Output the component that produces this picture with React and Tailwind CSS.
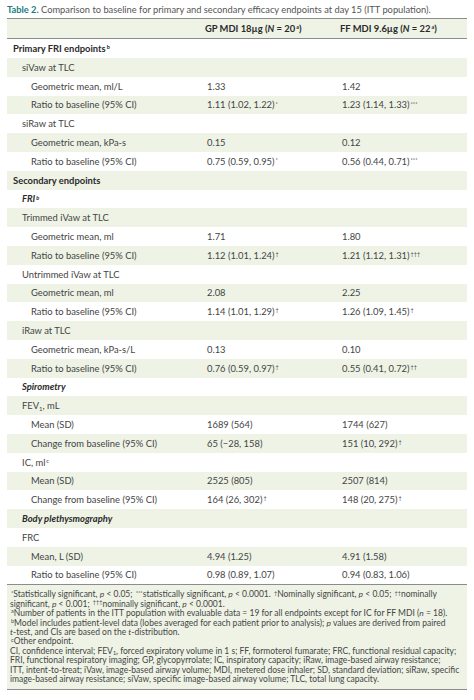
import React from "react";

const rows = [
  { level: 0, label: "Primary FRI endpoints", sup: "b", bold: true },
  { level: 1, label: "siVaw at TLC" },
  { level: 2, label: "Geometric mean, ml/L", a: "1.33", b: "1.42" },
  { level: 2, label: "Ratio to baseline (95% CI)", a: "1.11 (1.02, 1.22)", as: "*", b: "1.23 (1.14, 1.33)", bs: "***" },
  { level: 1, label: "siRaw at TLC" },
  { level: 2, label: "Geometric mean, kPa-s", a: "0.15", b: "0.12" },
  { level: 2, label: "Ratio to baseline (95% CI)", a: "0.75 (0.59, 0.95)", as: "*", b: "0.56 (0.44, 0.71)", bs: "***" },
  { level: 0, label: "Secondary endpoints", bold: true },
  { level: 1, label: "FRI", sup: "b", bold: true, italic: true },
  { level: 1, label: "Trimmed iVaw at TLC" },
  { level: 2, label: "Geometric mean, ml", a: "1.71", b: "1.80" },
  { level: 2, label: "Ratio to baseline (95% CI)", a: "1.12 (1.01, 1.24)", as: "†", b: "1.21 (1.12, 1.31)", bs: "†††" },
  { level: 1, label: "Untrimmed iVaw at TLC" },
  { level: 2, label: "Geometric mean, ml", a: "2.08", b: "2.25" },
  { level: 2, label: "Ratio to baseline (95% CI)", a: "1.14 (1.01, 1.29)", as: "†", b: "1.26 (1.09, 1.45)", bs: "†" },
  { level: 1, label: "iRaw at TLC" },
  { level: 2, label: "Geometric mean, kPa-s/L", a: "0.13", b: "0.10" },
  { level: 2, label: "Ratio to baseline (95% CI)", a: "0.76 (0.59, 0.97)", as: "†", b: "0.55 (0.41, 0.72)", bs: "††" },
  { level: 1, label: "Spirometry", bold: true, italic: true },
  { level: 1, label: "FEV", sub: "1", rest: ", mL" },
  { level: 2, label: "Mean (SD)", a: "1689 (564)", b: "1744 (627)" },
  { level: 2, label: "Change from baseline (95% CI)", a: "65 (−28, 158)", b: "151 (10, 292)", bs: "†" },
  { level: 1, label: "IC, ml", sup: "c" },
  { level: 2, label: "Mean (SD)", a: "2525 (805)", b: "2507 (814)" },
  { level: 2, label: "Change from baseline (95% CI)", a: "164 (26, 302)", as: "†", b: "148 (20, 275)", bs: "†" },
  { level: 1, label: "Body plethysmography", bold: true, italic: true },
  { level: 1, label: "FRC" },
  { level: 2, label: "Mean, L (SD)", a: "4.94 (1.25)", b: "4.91 (1.58)" },
  { level: 2, label: "Ratio to baseline (95% CI)", a: "0.98 (0.89, 1.07)", b: "0.94 (0.83, 1.06)" },
];

const indent = ["pl-[6px]", "pl-[15px]", "pl-[24px]"];

const Sup = ({ children }) => <sup className="text-[5.5px] leading-[0] ml-[1px]">{children}</sup>;

const Row = ({ row, shaded }) => (
  <div className={`flex items-center h-[18.8px] ${shaded ? "bg-[#eef3e6]" : "bg-white"}`}>
    <div
      className={`w-[200px] ${indent[row.level]} ${row.bold ? "font-bold text-[#2a2a2a]" : ""} ${row.italic ? "italic" : ""}`}
    >
      {row.label}
      {row.sub && <sub className="text-[6px] leading-[0]">{row.sub}</sub>}
      {row.rest}
      {row.sup && <Sup>{row.sup}</Sup>}
    </div>
    <div className="w-[135px]">
      {row.a}
      {row.as && <Sup>{row.as}</Sup>}
    </div>
    <div className="flex-1">
      {row.b}
      {row.bs && <Sup>{row.bs}</Sup>}
    </div>
  </div>
);

export default function App() {
  return (
    <div className="w-[474px] h-[700px] bg-white px-[7px] pt-[5px] text-[#444] font-['Lato','Liberation_Sans',sans-serif] text-[9.4px] leading-none">
      <div className="text-[9.3px] text-[#555] mb-[4px]">
        <span className="font-bold text-[#1c7d84]">Table 2.</span>{" "}
        Comparison to baseline for primary and secondary efficacy endpoints at day 15 (ITT population).
      </div>
      <div className="border-t-[1.5px] border-b-[1.5px] border-[#8c8c8c]">
        <div className="flex items-center h-[19px] bg-[#eef3e6] font-bold text-[#2a2a2a]">
          <div className="w-[198px]"></div>
          <div className="w-[135px]">
            GP MDI 18µg (<span className="italic">N</span> = 20<Sup>a</Sup>)
          </div>
          <div className="flex-1">
            FF MDI 9.6µg (<span className="italic">N</span> = 22<Sup>a</Sup>)
          </div>
        </div>
      </div>
      <div>
        {rows.map((row, i) => (
          <Row key={i} row={row} shaded={i % 2 === 1} />
        ))}
      </div>
      <div className="border-t-[1.5px] border-b-[1.5px] border-[#8c8c8c] bg-[#eef3e6] px-[3px] py-[5px] text-[8.5px] leading-[9.4px] text-[#454545] whitespace-nowrap">
        <div>
          <Sup>*</Sup>Statistically significant, <i>p</i> &lt; 0.05; <Sup>***</Sup>statistically significant, <i>p</i> &lt; 0.0001. <Sup>†</Sup>Nominally significant, <i>p</i> &lt; 0.05; <Sup>††</Sup>nominally
          <br />
          significant, <i>p</i> &lt; 0.001; <Sup>†††</Sup>nominally significant, <i>p</i> &lt; 0.0001.
        </div>
        <div>
          <Sup>a</Sup>Number of patients in the ITT population with evaluable data = 19 for all endpoints except for IC for FF MDI (<i>n</i> = 18).
        </div>
        <div>
          <Sup>b</Sup>Model includes patient-level data (lobes averaged for each patient prior to analysis); <i>p</i> values are derived from paired
          <br />
          <i>t</i>-test, and CIs are based on the <i>t</i>-distribution.
        </div>
        <div>
          <Sup>c</Sup>Other endpoint.
        </div>
        <div>
          CI, confidence interval; FEV<sub className="text-[5.5px] leading-[0]">1</sub>, forced expiratory volume in 1 s; FF, formoterol fumarate; FRC, functional residual capacity;
          <br />
          FRI, functional respiratory imaging; GP, glycopyrrolate; IC, inspiratory capacity; iRaw, image-based airway resistance;
          <br />
          ITT, intent-to-treat; iVaw, image-based airway volume; MDI, metered dose inhaler; SD, standard deviation; siRaw, specific
          <br />
          image-based airway resistance; siVaw, specific image-based airway volume; TLC, total lung capacity.
        </div>
      </div>
    </div>
  );
}
